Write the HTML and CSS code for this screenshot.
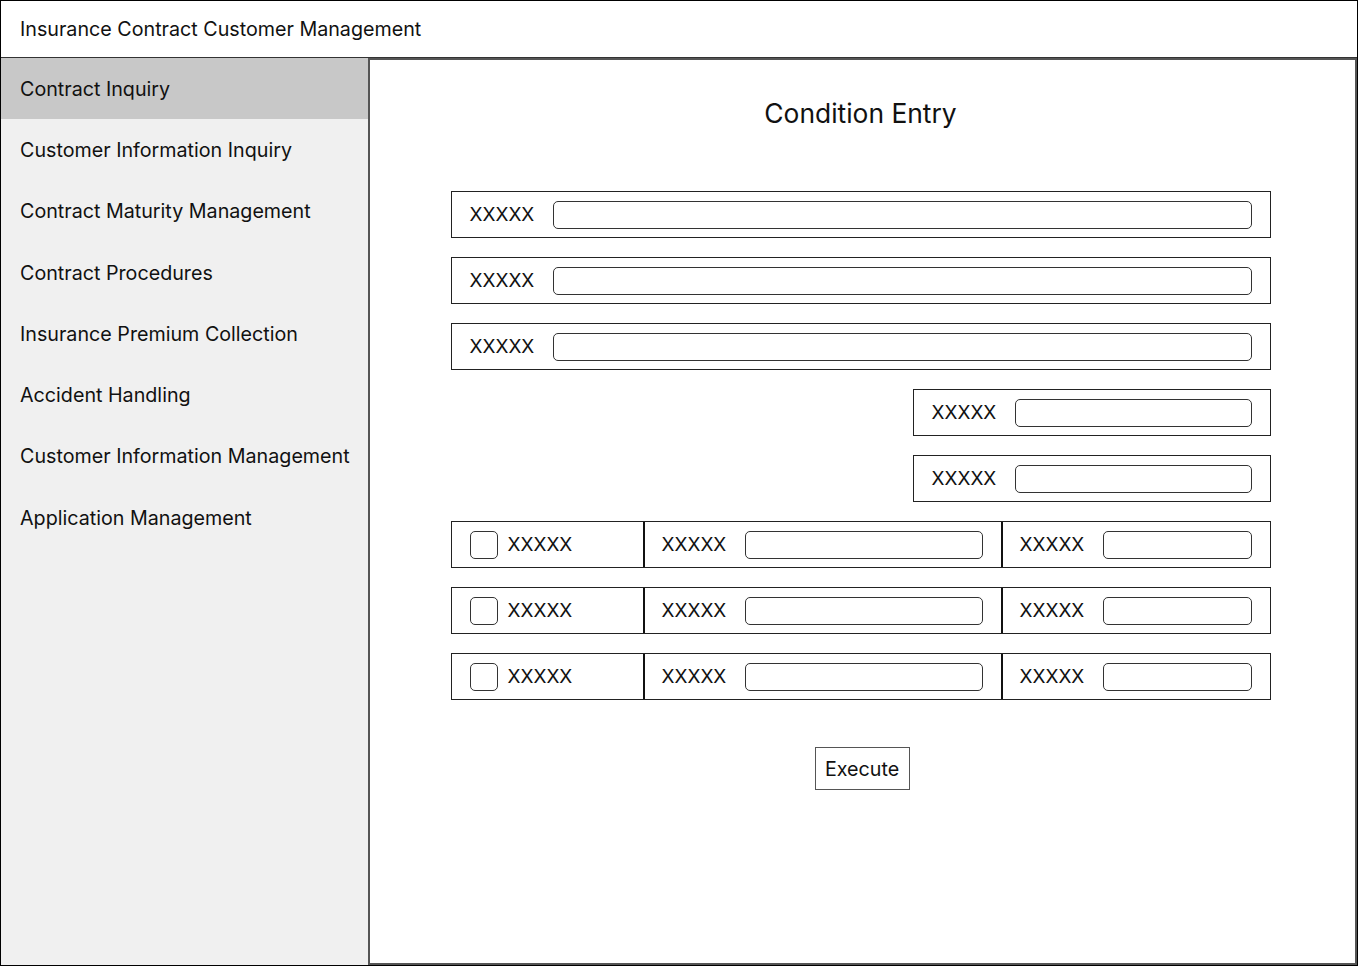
FILE: index.html
```html
<!DOCTYPE html>
<html lang="en">
<head>
  <meta charset="UTF-8" />
  <meta name="viewport" content="width=device-width, initial-scale=1.0"/>
  <title>Insurance Contract Customer Management</title>
  <link rel="stylesheet" href="styles.css">
</head>
<body>
  <div class="app">
    <header class="app-header">Insurance Contract Customer Management</header>

    <div class="app-body">
      <nav class="side-menu">
        <div class="menu-item active">Contract Inquiry</div>
        <div class="menu-item">Customer Information Inquiry</div>
        <div class="menu-item">Contract Maturity Management</div>
        <div class="menu-item">Contract Procedures</div>
        <div class="menu-item">Insurance Premium Collection</div>
        <div class="menu-item">Accident Handling</div>
        <div class="menu-item">Customer Information Management</div>
        <div class="menu-item">Application Management</div>
      </nav>

      <main class="content">
        <h1 class="page-title">Condition Entry</h1>

        <div class="form">
          <div class="field-row">
            <label class="field">
              <span class="field-label">XXXXX</span>
              <input class="text-input" type="text">
            </label>
          </div>
          <div class="field-row">
            <label class="field">
              <span class="field-label">XXXXX</span>
              <input class="text-input" type="text">
            </label>
          </div>
          <div class="field-row">
            <label class="field">
              <span class="field-label">XXXXX</span>
              <input class="text-input" type="text">
            </label>
          </div>

          <div class="field-row short">
            <label class="field">
              <span class="field-label">XXXXX</span>
              <input class="text-input" type="text">
            </label>
          </div>
          <div class="field-row short">
            <label class="field">
              <span class="field-label">XXXXX</span>
              <input class="text-input" type="text">
            </label>
          </div>

          <div class="field-row split">
            <label class="check-cell">
              <span class="check-box"></span>
              <span>XXXXX</span>
            </label>
            <label class="field">
              <span class="field-label">XXXXX</span>
              <input class="text-input" type="text">
            </label>
            <label class="field">
              <span class="field-label">XXXXX</span>
              <input class="text-input" type="text">
            </label>
          </div>
          <div class="field-row split">
            <label class="check-cell">
              <span class="check-box"></span>
              <span>XXXXX</span>
            </label>
            <label class="field">
              <span class="field-label">XXXXX</span>
              <input class="text-input" type="text">
            </label>
            <label class="field">
              <span class="field-label">XXXXX</span>
              <input class="text-input" type="text">
            </label>
          </div>
          <div class="field-row split">
            <label class="check-cell">
              <span class="check-box"></span>
              <span>XXXXX</span>
            </label>
            <label class="field">
              <span class="field-label">XXXXX</span>
              <input class="text-input" type="text">
            </label>
            <label class="field">
              <span class="field-label">XXXXX</span>
              <input class="text-input" type="text">
            </label>
          </div>
        </div>

        <div class="actions">
          <button class="execute-button">Execute</button>
        </div>
      </main>
    </div>
  </div>
</body>
</html>
```

FILE: styles.css
```css
* {
  box-sizing: border-box;
}

body {
  margin: 0;
  background: #fff;
  color: #111;
  font-family: 'Inter', 'Liberation Sans', sans-serif;
  font-size: 19px;
}

.app {
  width: 1358px;
  height: 966px;
  border: 1px solid #000;
  display: flex;
  flex-direction: column;
}

.app-header {
  height: 57px;
  padding-left: 19px;
  display: flex;
  align-items: center;
  border-bottom: 1px solid #333;
  font-size: 19.7px;
  flex-shrink: 0;
}

.app-body {
  flex: 1;
  display: flex;
  min-height: 0;
}

.side-menu {
  width: 367px;
  background: #f0f0f0;
  flex-shrink: 0;
}

.menu-item {
  height: 61.3px;
  padding-left: 19px;
  display: flex;
  align-items: center;
  font-size: 19.7px;
}

.menu-item.active {
  background: #c8c8c8;
}

.content {
  flex: 1;
  border: 2px solid #555;
  padding-right: 4px;
  display: flex;
  flex-direction: column;
  align-items: center;
}

.page-title {
  margin: 37px 0 0;
  font-size: 26.4px;
  font-weight: 400;
  line-height: 32px;
}

.form {
  width: 820px;
  margin-top: 62px;
  display: flex;
  flex-direction: column;
  gap: 19px;
}

.field-row {
  height: 47px;
  border: 1px solid #222;
  display: flex;
}

.field-row.short {
  width: 358px;
  align-self: flex-end;
}

.field {
  flex: 1;
  min-width: 0;
  display: flex;
  align-items: center;
  gap: 19px;
  padding: 0 18px 0 17px;
}

.field-label {
  width: 64px;
  flex-shrink: 0;
}

.text-input {
  flex: 1;
  width: 0;
  min-width: 0;
  height: 28px;
  border: 1px solid #333;
  border-radius: 5px;
  background: #fff;
  font: inherit;
}

.field-row:not(.split) .field {
  padding-left: 18px;
}

.split .check-cell {
  width: 191px;
  flex-shrink: 0;
}

.split .field:nth-child(2) {
  flex: none;
  width: 358px;
  border-left: 2px solid #111;
}

.split .field:nth-child(3) {
  border-left: 2px solid #111;
}

.check-cell {
  display: flex;
  align-items: center;
  gap: 10px;
  padding-left: 18px;
}

.check-box {
  width: 28px;
  height: 28px;
  border: 1px solid #333;
  border-radius: 5px;
  background: #fff;
}

.actions {
  margin-top: 47px;
  padding-left: 3px;
}

.execute-button {
  width: 95px;
  height: 43px;
  border: 1px solid #555;
  background: #fff;
  color: #111;
  font: inherit;
  font-size: 19.7px;
  padding: 0;
  cursor: pointer;
}
```
